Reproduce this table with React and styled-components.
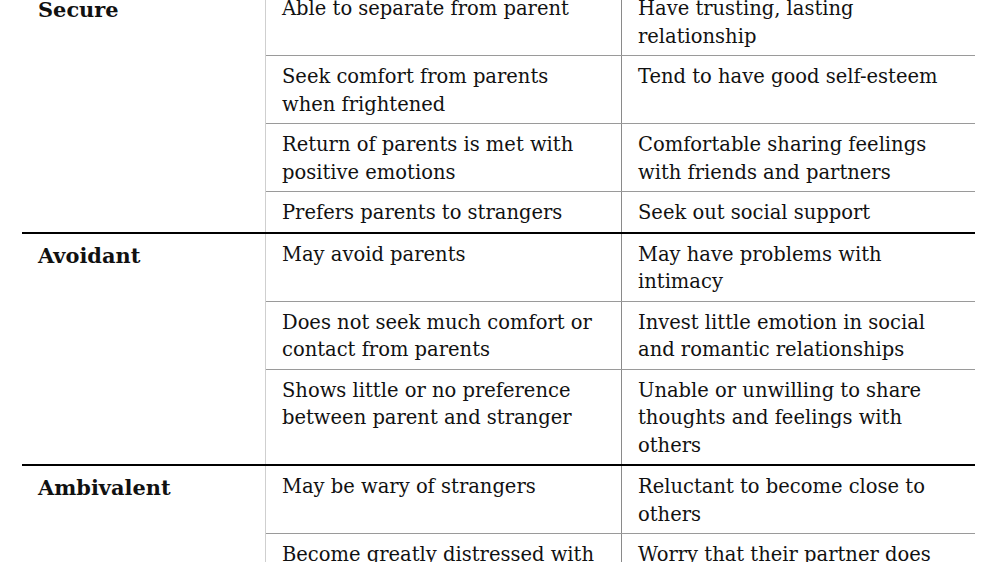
import React from "react";
import styled, { createGlobalStyle } from "styled-components";

const GlobalStyle = createGlobalStyle`
  html, body { margin: 0; padding: 0; background: #fff; overflow: hidden; }
  body { font-family: "DejaVu Serif", "Liberation Serif", serif; color: #111; }
`;

const Page = styled.div`
  width: 1000px;
  height: 562px;
  overflow: hidden;
  padding: 0 25px 0 22px;
  box-sizing: border-box;
`;

const Table = styled.div`
  margin-top: -14px;
  display: flex;
  flex-direction: column;
`;

const Group = styled.section`
  display: grid;
  grid-template-columns: 244px 1fr;
  border-top: 2px solid #000;
`;

const Label = styled.h3`
  margin: 0;
  padding: 8px 0 0 16px;
  font-size: 20.9px;
  line-height: 28px;
  font-weight: bold;
  border-right: 1px solid #cfcfcf;
`;

const Rows = styled.div`
  display: flex;
  flex-direction: column;
`;

const Row = styled.div`
  display: grid;
  grid-template-columns: 355px 1fr;
  & + & { border-top: 1px solid #9a9a9a; }
`;

const Cell = styled.div`
  padding: 7px ${({ $divider }) => ($divider ? "25px" : "24px")} 5px 16px;
  font-size: 19.5px;
  line-height: 27.5px;
  border-left: ${({ $divider }) => ($divider ? "1px solid #8a8a8a" : "none")};
`;

const data = [
  {
    style: "Secure",
    rows: [
      ["Able to separate from parent", "Have trusting, lasting relationship"],
      ["Seek comfort from parents when frightened", "Tend to have good self-esteem"],
      ["Return of parents is met with positive emotions", "Comfortable sharing feelings with friends and partners"],
      ["Prefers parents to strangers", "Seek out social support"],
    ],
  },
  {
    style: "Avoidant",
    rows: [
      ["May avoid parents", "May have problems with intimacy"],
      ["Does not seek much comfort or contact from parents", "Invest little emotion in social and romantic relationships"],
      ["Shows little or no preference between parent and stranger", "Unable or unwilling to share thoughts and feelings with others"],
    ],
  },
  {
    style: "Ambivalent",
    rows: [
      ["May be wary of strangers", "Reluctant to become close to others"],
      ["Become greatly distressed with the parent leaves", "Worry that their partner does not love them"],
    ],
  },
];

export default function App() {
  return (
    <Page>
      <GlobalStyle />
      <Table>
        {data.map((g) => (
          <Group key={g.style}>
            <Label>{g.style}</Label>
            <Rows>
              {g.rows.map(([child, adult], i) => (
                <Row key={i}>
                  <Cell>{child}</Cell>
                  <Cell $divider>{adult}</Cell>
                </Row>
              ))}
            </Rows>
          </Group>
        ))}
      </Table>
    </Page>
  );
}
